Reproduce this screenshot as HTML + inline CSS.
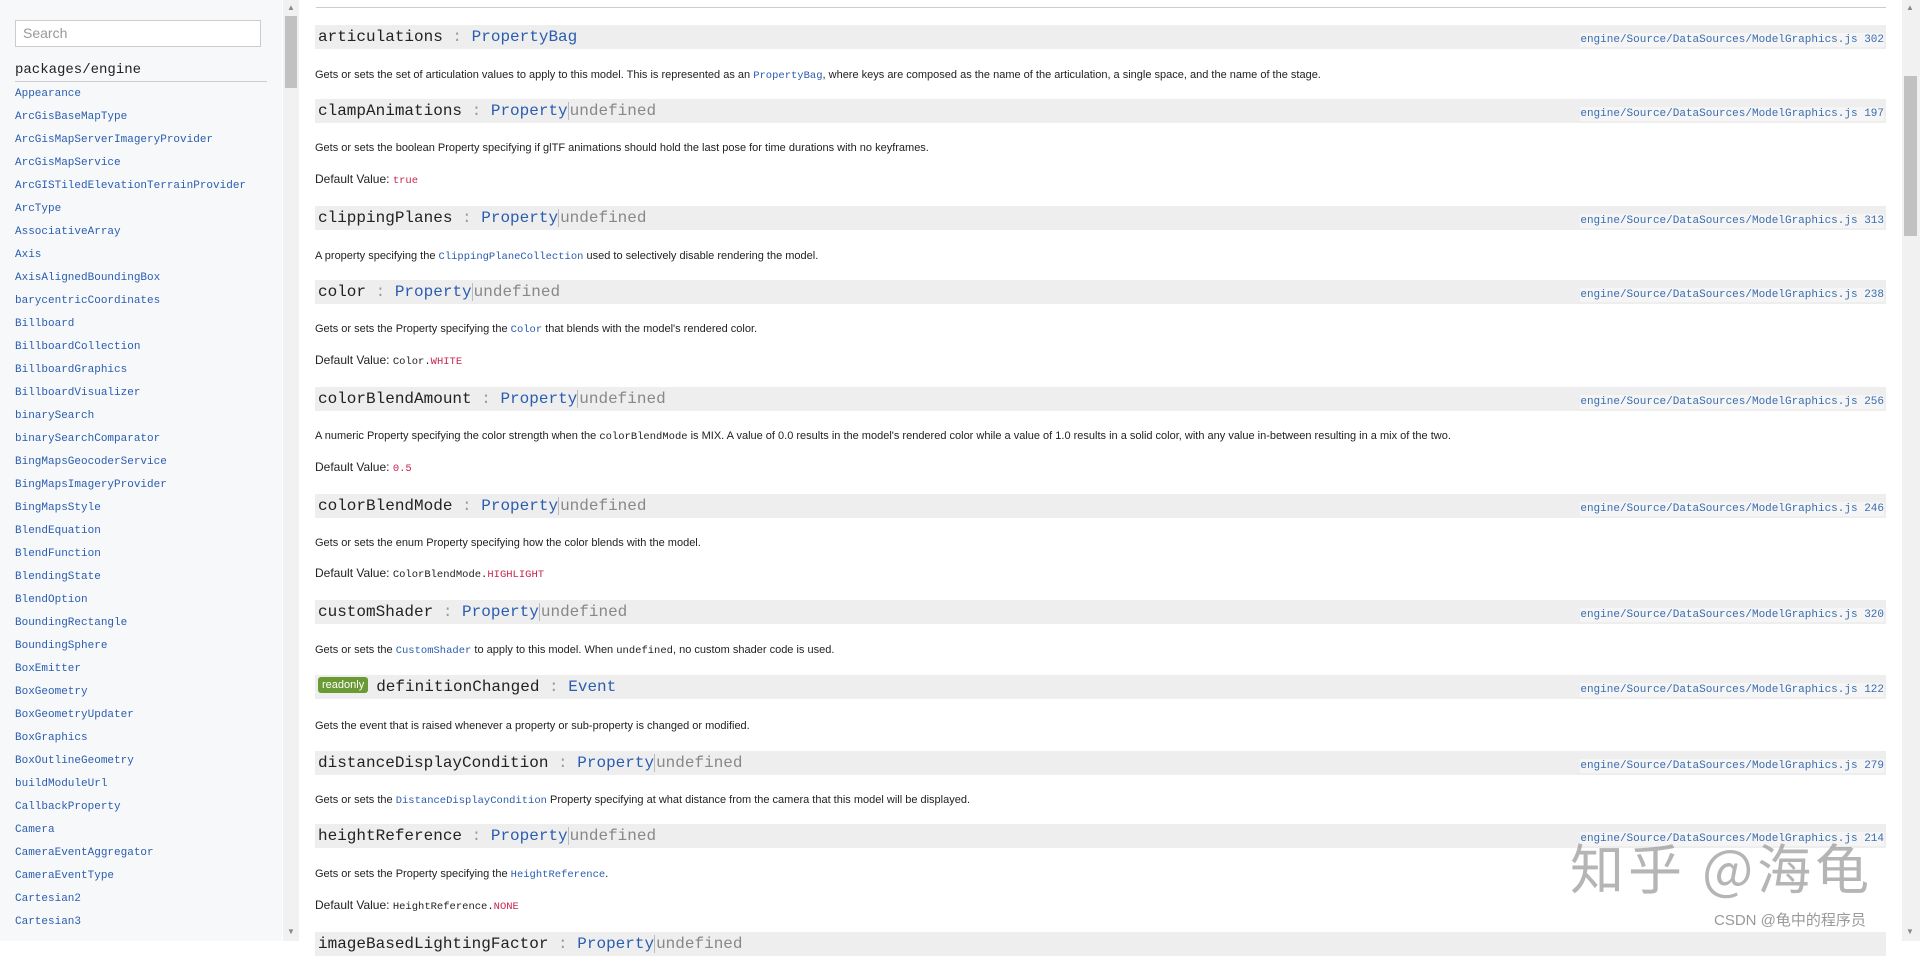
<!DOCTYPE html>
<html><head><meta charset="utf-8"><style>
*{margin:0;padding:0;box-sizing:border-box}
body{width:1920px;height:941px;overflow:hidden;background:#fff;position:relative;font-family:"Liberation Sans",sans-serif}
#side{position:absolute;left:0;top:0;width:282px;height:941px;background:#f7f8fa}
#sb1{position:absolute;left:283px;top:0;width:16px;height:941px;background:#f1f1f1}
#sb1 .t{position:absolute;left:2px;top:16px;width:12px;height:72px;background:#c1c1c1}
#sb2{position:absolute;left:1902px;top:0;width:18px;height:941px;background:#f1f1f1}
#sb2 .t{position:absolute;left:2px;top:76px;width:13px;height:160px;background:#c1c1c1}
.arr{position:absolute;font-size:8px;color:#888;left:4px}
#search{position:absolute;left:15px;top:20px;width:246px;height:27px;border:1px solid #ccc;background:#fff;font-size:14px;color:#999;padding:4px 7px}
#pk{position:absolute;left:15px;top:62px;width:252px;font-family:"Liberation Mono",monospace;font-size:14px;color:#222;border-bottom:1px solid #ccc;padding-bottom:3px}
.li{position:absolute;left:15px;font-family:"Liberation Mono",monospace;font-size:11px;color:#2a5db0}
.hr{position:absolute;left:316px;top:7px;width:1570px;height:1px;background:#ccc}
.h{position:absolute;left:315px;width:1571px;height:24px;background:#eee}
.h .n{position:absolute;left:3px;top:1px;font-family:"Liberation Mono",monospace;font-size:16px;color:#222;white-space:nowrap;line-height:22px}
.c{color:#999}.ty{color:#2a5db0}.u{color:#888;border-left:1px solid #bbb;padding-left:1px}
.h .f{position:absolute;right:2px;top:8px;font-family:"Liberation Mono",monospace;font-size:11px;color:#3a6db0;background:#f5f5f5;line-height:14px}
.ro{display:inline-block;background:#6a9a33;color:#fff;font-family:"Liberation Sans",sans-serif;font-size:11px;padding:1px 4px;border-radius:3px;vertical-align:3px;margin-right:8px;line-height:14px}
.d{position:absolute;left:315px;font-size:11px;color:#222;white-space:nowrap;line-height:14px}
.d code{font-family:"Liberation Mono",monospace;color:#2a5db0;font-size:10.5px}
.d code.k{color:#222}
.dv{position:absolute;left:315px;font-size:12px;color:#222;line-height:16px}
.dv code{font-family:"Liberation Mono",monospace;font-size:10.5px;color:#222}
.dv code span{color:#c7254e}
#wm{position:absolute;left:1570px;top:826px;font-family:"Noto Sans CJK SC",sans-serif;font-size:54px;color:rgba(150,150,150,.7);white-space:nowrap;letter-spacing:4px}
#cs{position:absolute;left:1714px;top:909px;font-family:"Liberation Sans","Noto Sans CJK SC",sans-serif;font-size:15px;color:#999}
</style></head><body>
<div id="side">
<div id="search">Search</div>
<div id="pk">packages/engine</div>
<div class="li" style="top:88px">Appearance</div>
<div class="li" style="top:111px">ArcGisBaseMapType</div>
<div class="li" style="top:134px">ArcGisMapServerImageryProvider</div>
<div class="li" style="top:157px">ArcGisMapService</div>
<div class="li" style="top:180px">ArcGISTiledElevationTerrainProvider</div>
<div class="li" style="top:203px">ArcType</div>
<div class="li" style="top:226px">AssociativeArray</div>
<div class="li" style="top:249px">Axis</div>
<div class="li" style="top:272px">AxisAlignedBoundingBox</div>
<div class="li" style="top:295px">barycentricCoordinates</div>
<div class="li" style="top:318px">Billboard</div>
<div class="li" style="top:341px">BillboardCollection</div>
<div class="li" style="top:364px">BillboardGraphics</div>
<div class="li" style="top:387px">BillboardVisualizer</div>
<div class="li" style="top:410px">binarySearch</div>
<div class="li" style="top:433px">binarySearchComparator</div>
<div class="li" style="top:456px">BingMapsGeocoderService</div>
<div class="li" style="top:479px">BingMapsImageryProvider</div>
<div class="li" style="top:502px">BingMapsStyle</div>
<div class="li" style="top:525px">BlendEquation</div>
<div class="li" style="top:548px">BlendFunction</div>
<div class="li" style="top:571px">BlendingState</div>
<div class="li" style="top:594px">BlendOption</div>
<div class="li" style="top:617px">BoundingRectangle</div>
<div class="li" style="top:640px">BoundingSphere</div>
<div class="li" style="top:663px">BoxEmitter</div>
<div class="li" style="top:686px">BoxGeometry</div>
<div class="li" style="top:709px">BoxGeometryUpdater</div>
<div class="li" style="top:732px">BoxGraphics</div>
<div class="li" style="top:755px">BoxOutlineGeometry</div>
<div class="li" style="top:778px">buildModuleUrl</div>
<div class="li" style="top:801px">CallbackProperty</div>
<div class="li" style="top:824px">Camera</div>
<div class="li" style="top:847px">CameraEventAggregator</div>
<div class="li" style="top:870px">CameraEventType</div>
<div class="li" style="top:893px">Cartesian2</div>
<div class="li" style="top:916px">Cartesian3</div>
</div>
<div id="sb1"><div class="arr" style="top:3px">▲</div><div class="t"></div><div class="arr" style="top:927px">▼</div></div>
<div id="sb2"><div class="arr" style="top:3px">▲</div><div class="t"></div><div class="arr" style="top:927px">▼</div></div>
<div class="hr"></div>

<div class="h" style="top:25px"><div class="n">articulations <span class="c">:</span> <span class="ty">PropertyBag</span></div><div class="f">engine/Source/DataSources/ModelGraphics.js 302</div></div>
<div class="d" style="top:68px">Gets or sets the set of articulation values to apply to this model. This is represented as an <code>PropertyBag</code>, where keys are composed as the name of the articulation, a single space, and the name of the stage.</div>

<div class="h" style="top:99px"><div class="n">clampAnimations <span class="c">:</span> <span class="ty">Property</span><span class="u">undefined</span></div><div class="f">engine/Source/DataSources/ModelGraphics.js 197</div></div>
<div class="d" style="top:141px">Gets or sets the boolean Property specifying if glTF animations should hold the last pose for time durations with no keyframes.</div>
<div class="dv" style="top:171px">Default Value: <code><span>true</span></code></div>

<div class="h" style="top:206px"><div class="n">clippingPlanes <span class="c">:</span> <span class="ty">Property</span><span class="u">undefined</span></div><div class="f">engine/Source/DataSources/ModelGraphics.js 313</div></div>
<div class="d" style="top:249px">A property specifying the <code>ClippingPlaneCollection</code> used to selectively disable rendering the model.</div>

<div class="h" style="top:280px"><div class="n">color <span class="c">:</span> <span class="ty">Property</span><span class="u">undefined</span></div><div class="f">engine/Source/DataSources/ModelGraphics.js 238</div></div>
<div class="d" style="top:322px">Gets or sets the Property specifying the <code>Color</code> that blends with the model's rendered color.</div>
<div class="dv" style="top:352px">Default Value: <code>Color.<span>WHITE</span></code></div>

<div class="h" style="top:387px"><div class="n">colorBlendAmount <span class="c">:</span> <span class="ty">Property</span><span class="u">undefined</span></div><div class="f">engine/Source/DataSources/ModelGraphics.js 256</div></div>
<div class="d" style="top:429px">A numeric Property specifying the color strength when the <code class="k">colorBlendMode</code> is MIX. A value of 0.0 results in the model's rendered color while a value of 1.0 results in a solid color, with any value in-between resulting in a mix of the two.</div>
<div class="dv" style="top:459px">Default Value: <code><span>0.5</span></code></div>

<div class="h" style="top:494px"><div class="n">colorBlendMode <span class="c">:</span> <span class="ty">Property</span><span class="u">undefined</span></div><div class="f">engine/Source/DataSources/ModelGraphics.js 246</div></div>
<div class="d" style="top:536px">Gets or sets the enum Property specifying how the color blends with the model.</div>
<div class="dv" style="top:565px">Default Value: <code>ColorBlendMode.<span>HIGHLIGHT</span></code></div>

<div class="h" style="top:600px"><div class="n">customShader <span class="c">:</span> <span class="ty">Property</span><span class="u">undefined</span></div><div class="f">engine/Source/DataSources/ModelGraphics.js 320</div></div>
<div class="d" style="top:643px">Gets or sets the <code>CustomShader</code> to apply to this model. When <code class="k">undefined</code>, no custom shader code is used.</div>

<div class="h" style="top:675px"><div class="n"><span class="ro">readonly</span>definitionChanged <span class="c">:</span> <span class="ty">Event</span></div><div class="f">engine/Source/DataSources/ModelGraphics.js 122</div></div>
<div class="d" style="top:719px">Gets the event that is raised whenever a property or sub-property is changed or modified.</div>

<div class="h" style="top:751px"><div class="n">distanceDisplayCondition <span class="c">:</span> <span class="ty">Property</span><span class="u">undefined</span></div><div class="f">engine/Source/DataSources/ModelGraphics.js 279</div></div>
<div class="d" style="top:793px">Gets or sets the <code>DistanceDisplayCondition</code> Property specifying at what distance from the camera that this model will be displayed.</div>

<div class="h" style="top:824px"><div class="n">heightReference <span class="c">:</span> <span class="ty">Property</span><span class="u">undefined</span></div><div class="f">engine/Source/DataSources/ModelGraphics.js 214</div></div>
<div class="d" style="top:867px">Gets or sets the Property specifying the <code>HeightReference</code>.</div>
<div class="dv" style="top:897px">Default Value: <code>HeightReference.<span>NONE</span></code></div>

<div class="h" style="top:932px"><div class="n">imageBasedLightingFactor <span class="c">:</span> <span class="ty">Property</span><span class="u">undefined</span></div></div>

<div id="wm">知乎 @海龟</div>
<div id="cs">CSDN @龟中的程序员</div>
</body></html>
